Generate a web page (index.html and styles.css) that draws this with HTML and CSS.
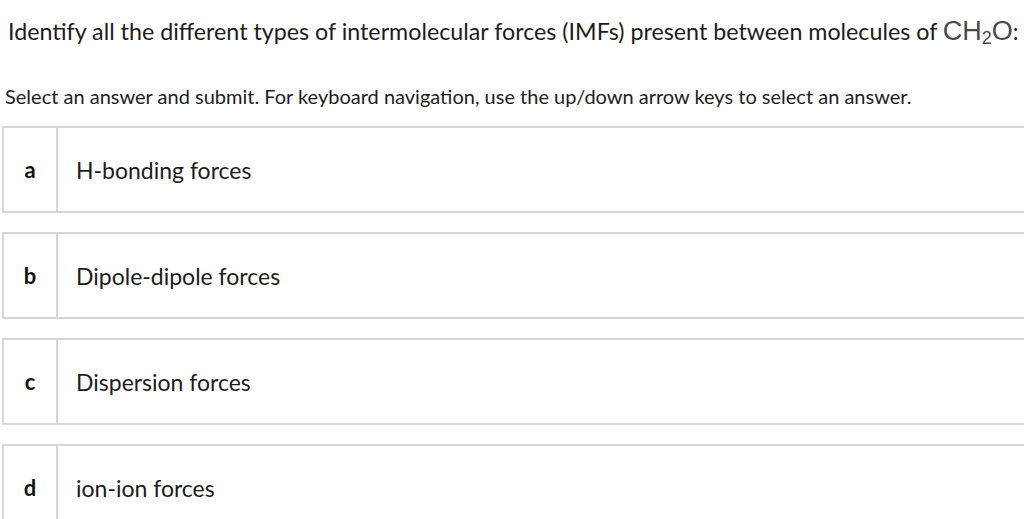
FILE: index.html
```html
<!DOCTYPE html>
<html>
<head>
<meta charset="utf-8">
<link rel="stylesheet" href="styles.css">
</head>
<body>
<div class="page">
  <h1 class="question">Identify all the different types of intermolecular forces (IMFs) present between molecules of <span class="formula">CH<sub>2</sub>O</span>:</h1>
  <p class="instructions">Select an answer and submit. For keyboard navigation, use the up/down arrow keys to select an answer.</p>
  <ul class="options">
    <li class="option"><span class="letter">a</span><span class="label">H-bonding forces</span></li>
    <li class="option"><span class="letter">b</span><span class="label">Dipole-dipole forces</span></li>
    <li class="option"><span class="letter">c</span><span class="label">Dispersion forces</span></li>
    <li class="option"><span class="letter">d</span><span class="label">ion-ion forces</span></li>
  </ul>
</div>
</body>
</html>
```
FILE: styles.css
```css
html, body {
  margin: 0;
  padding: 0;
  background: #ffffff;
  overflow: hidden;
}
.page {
  font-family: Lato, "Noto Sans", sans-serif;
  color: #1c1c1c;
  padding-top: 13px;
}
.question {
  margin: 0;
  padding-left: 8px;
  font-size: 23.25px;
  font-weight: 400;
  line-height: 36px;
  white-space: nowrap;
}
.formula {
  font-family: "Liberation Sans", Arial, sans-serif;
  color: #4a4a4a;
  font-size: 27px;
}
.formula sub {
  font-size: 18px;
  vertical-align: -4px;
  line-height: 0;
}
.instructions {
  margin: 0;
  padding-top: 32px;
  padding-left: 5px;
  font-size: 20px;
  line-height: 30px;
  white-space: nowrap;
}
.options {
  list-style: none;
  margin: 15px 0 0 2px;
  padding: 0;
  display: flex;
  flex-direction: column;
  gap: 19px;
  width: 1040px;
}
.option {
  display: flex;
  height: 87px;
  box-sizing: border-box;
  border: 2px solid #d6d6d2;
  align-items: stretch;
}
.letter {
  width: 52px;
  flex: none;
  border-right: 2px solid #d6d6d2;
  display: flex;
  align-items: center;
  justify-content: center;
  font-weight: 700;
  font-size: 22px;
  color: #111;
}
.label {
  display: flex;
  align-items: center;
  padding-left: 18px;
  font-size: 23px;
}
```
